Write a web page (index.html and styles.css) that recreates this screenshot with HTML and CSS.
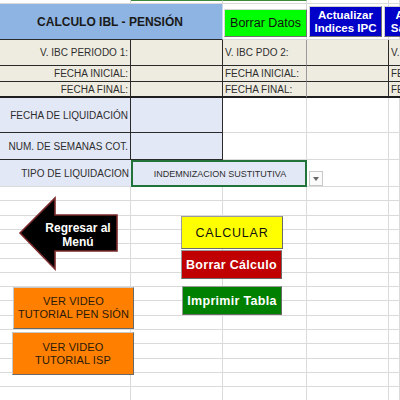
FILE: index.html
```
<!DOCTYPE html>
<html lang="es">
<head>
<meta charset="utf-8">
<title>Calculo IBL - Pensión</title>
<link rel="stylesheet" href="styles.css">
</head>
<body>
<div class="page">
  <div class="sheet">
    <div class="c"></div><div class="c sel-top"></div><div class="c sel-top"></div><div class="c"></div><div class="c"></div>

    <div class="title">CALCULO IBL - PENSIÓN</div><div class="c"></div><div class="c"></div><div class="c"></div>

    <div class="beige lbl dr">V. IBC PERIODO 1:</div><div class="beige dr"></div><div class="beige lbl-l mr">V. IBC PDO 2:</div><div class="beige dr"></div><div class="beige lbl-l">V.</div>
    <div class="beige lbl dr">FECHA INICIAL:</div><div class="beige dr"></div><div class="beige lbl-l mr">FECHA INICIAL:</div><div class="beige dr"></div><div class="beige lbl-l">FE</div>
    <div class="beige lbl dr thick">FECHA FINAL:</div><div class="beige dr thick"></div><div class="beige lbl-l mr thick">FECHA FINAL:</div><div class="beige dr thick"></div><div class="beige lbl-l thick">FE</div>

    <div class="lav lbl dr db">FECHA DE LIQUIDACIÓN</div><div class="lav dr db"></div><div class="c"></div><div class="c"></div><div class="c"></div>
    <div class="lav lbl dr db">NUM. DE SEMANAS COT.</div><div class="lav dr db"></div><div class="c"></div><div class="c"></div><div class="c"></div>
    <div class="lav lbl gb">TIPO DE LIQUIDACION</div><div class="lav select">INDEMNIZACION SUSTITUTIVA<span class="handle"></span></div><div class="c"></div><div class="c"></div>

    <div class="empty">
      <div class="col a"></div><div class="col b"></div><div class="col cc"></div><div class="col d"></div><div class="col e"></div>
    </div>
  </div>

  <div class="dropdown"><span class="tri"></span></div>

  <div class="btn btn-borrar-datos">Borrar Datos</div>
  <div class="btn btn-ipc">Actualizar<br>Indices IPC</div>
  <div class="btn btn-sal">Actualizar<br>Salario Mín.</div>

  <div class="back-arrow">
    <svg width="102" height="78" viewBox="0 0 102 78">
      <polygon points="2,37 37,2 37,19 99,19 99,55 37,55 37,73" fill="#000" stroke="#7a2a2a" stroke-width="1.6"/>
    </svg>
    <span class="back-label">Regresar al<br>Menú</span>
  </div>

  <div class="btn btn-calc">CALCULAR</div>
  <div class="btn btn-borrar">Borrar Cálculo</div>
  <div class="btn btn-print">Imprimir Tabla</div>

  <div class="btn btn-orange btn-v1">VER VIDEO<br>TUTORIAL PEN SIÓN</div>
  <div class="btn btn-orange btn-v2">VER VIDEO<br>TUTORIAL ISP</div>
</div>
</body>
</html>
```

FILE: styles.css
```
* { box-sizing: border-box; }
html, body { margin: 0; padding: 0; background: #fff; }
.page {
  position: relative;
  width: 400px;
  height: 400px;
  overflow: hidden;
  font-family: "Liberation Sans", Arial, sans-serif;
}
.sheet {
  display: grid;
  grid-template-columns: 131px 92px 84px 82px 11px;
  grid-template-rows: 4px 36px 26px 16px 16px 35px 27px 27px 213px;
  width: 400px;
  height: 400px;
}
.c {
  border-right: 1px solid #dadada;
  border-bottom: 1px solid #dadada;
}
.sel-top { border-top: 1px solid #3c8a3c; }
.title {
  grid-column: span 2;
  background: #8db4e2;
  border-right: 1px solid #c9d8ec;
  border-bottom: 1px solid #2a2a2a;
  display: flex;
  align-items: center;
  justify-content: center;
  font-weight: bold;
  font-size: 12px;
  color: #1a1a1a;
  padding-top: 1px;
  padding-right: 2px;
}
.beige, .lav {
  font-size: 10px;
  color: #2e2e2e;
  display: flex;
  align-items: center;
  border-bottom: 1px solid #2a2a2a;
  white-space: nowrap;
  overflow: hidden;
}
.beige { background: #eeece1; }
.lav { background: #e3e8f6; }
.lbl { justify-content: flex-end; padding-right: 2px; }
.lbl-l { justify-content: flex-start; padding-left: 2px; }
.dr { border-right: 1px solid #2a2a2a; }
.mr { border-right: 1px solid #9a9a9a; }
.thick { border-bottom: 2px solid #1e1e1e; }
.db { border-bottom: 1px solid #2a2a2a; }
.gb { border-right: 0; border-bottom: 1px solid #dadada; }
.select {
  grid-column: span 2;
  position: relative;
  border: 2px solid #21733a;
  justify-content: center;
  font-size: 9px;
  padding-left: 2px;
}
.handle {
  position: absolute;
  right: -4px;
  bottom: -4px;
  width: 5px;
  height: 5px;
  background: #21733a;
  border: 1px solid #fff;
}
.empty {
  grid-column: 1 / -1;
  display: flex;
}
.col {
  border-right: 1px solid #dadada;
  background-image: repeating-linear-gradient(to bottom, transparent 0, transparent 13.3px, #dadada 13.3px, #dadada 14.3px);
}
.col.a { width: 131px; }
.col.b { width: 92px; }
.col.cc { width: 84px; }
.col.d { width: 82px; }
.col.e { width: 11px; }

.dropdown {
  position: absolute;
  left: 309px;
  top: 171px;
  width: 14px;
  height: 15px;
  background: #fbfbfb;
  border: 1px solid #c8c8c8;
  display: flex;
  align-items: center;
  justify-content: center;
}
.tri {
  width: 0;
  height: 0;
  border-left: 3px solid transparent;
  border-right: 3px solid transparent;
  border-top: 4px solid #666;
}

.btn {
  position: absolute;
  display: flex;
  align-items: center;
  justify-content: center;
  text-align: center;
  white-space: nowrap;
  border: 1px solid #9a9a9a;
  border-right-color: #6a6a6a;
  border-bottom-color: #6a6a6a;
}
.btn-borrar-datos {
  left: 224px; top: 9px; width: 83px; height: 28px;
  background: #00ff00;
  border-color: #d8d8d8 #707070 #707070 #d8d8d8;
  font-size: 12.5px;
  color: #111;
}
.btn-ipc, .btn-sal {
  top: 6px; height: 31px;
  background: #0000c8;
  color: #fff;
  font-weight: bold;
  font-size: 11.5px;
  line-height: 13px;
  border-color: #d0d0d0 #707070 #707070 #d0d0d0;
}
.btn-ipc { left: 309px; width: 73px; }
.btn-sal { left: 384px; width: 78px; }

.back-arrow {
  position: absolute;
  left: 18px;
  top: 196px;
  width: 102px;
  height: 78px;
}
.back-arrow svg { position: absolute; left: 0; top: 0; }
.back-label {
  position: absolute;
  left: 22px;
  top: 25px;
  width: 76px;
  text-align: center;
  color: #fff;
  font-weight: bold;
  font-size: 12px;
  line-height: 14px;
}

.btn-calc {
  left: 181px; top: 216px; width: 102px; height: 33px;
  background: #ffff00;
  font-size: 12.5px;
  letter-spacing: 0.8px;
  color: #111;
}
.btn-borrar {
  left: 181px; top: 250px; width: 101px; height: 29px;
  background: #c00000;
  color: #fff;
  font-weight: bold;
  font-size: 12.5px;
  letter-spacing: 0.3px;
}
.btn-print {
  left: 182px; top: 286px; width: 100px; height: 29px;
  background: #008000;
  color: #fff;
  font-weight: bold;
  font-size: 12.5px;
  letter-spacing: 0.3px;
}
.btn-orange {
  background: #ff8000;
  color: #2a1a0a;
  font-size: 11px;
  line-height: 13px;
  letter-spacing: 0.1px;
  border-color: #c8c8c8 #6a6a6a #6a6a6a #c8c8c8;
}
.btn-v1 { left: 13px; top: 287px; width: 121px; height: 42px; }
.btn-v2 { left: 12px; top: 332px; width: 122px; height: 43px; }
```
